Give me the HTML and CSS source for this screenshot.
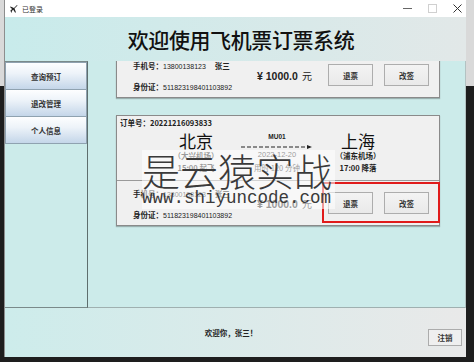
FILE: index.html
```html
<!DOCTYPE html>
<html>
<head>
    <title>已登录</title>
    <link rel="stylesheet" href="styles.css">
</head>
<body>
    <div class="window">
        <div class="titlebar">
            <svg class="app-icon" width="8" height="8" viewBox="0 0 16 16">
                <path d="M15 1 L9 7 L12 15 L10 15 L6.5 9.5 L3.5 12 L4 15 L2.5 15 L1.5 12.5 L-1 11.5 L1 11.5 L4 8 L0 4 L1 3 L8 6 L14 0 Z" fill="#222"/>
            </svg>
            <span class="title-text">已登录</span>
            <div class="win-controls">
                <span class="ctl ctl-min"></span>
                <span class="ctl ctl-max"></span>
                <span class="ctl ctl-close">
                    <svg width="9" height="9" viewBox="0 0 9 9"><path d="M0.5 0.5 L8.5 8.5 M8.5 0.5 L0.5 8.5" stroke="#333" stroke-width="1"/></svg>
                </span>
            </div>
        </div>

        <div class="header">
            <h1>欢迎使用飞机票订票系统</h1>
        </div>

        <div class="middle">
            <div class="sidebar">
                <button class="nav-button">查询预订</button>
                <button class="nav-button">退改管理</button>
                <button class="nav-button">个人信息</button>
            </div>

            <div class="main">
                <div class="ticket-list">
                    <!-- first ticket, scrolled partly out of view -->
                    <div class="ticket">
                        <div class="ticket-top">
                            <div class="order-no">订单号：20221216081520</div>
                            <div class="route">
                                <div class="stop">
                                    <div class="city">北京</div>
                                    <div class="airport">（大兴机场）</div>
                                    <div class="time">08:00 起飞</div>
                                </div>
                                <div class="flight">
                                    <div class="flight-no">MU01</div>
                                    <svg class="arrow" width="72" height="8" viewBox="0 0 72 8">
                                        <path d="M0 5 H69" stroke="#222" stroke-width="1" stroke-dasharray="4 2"/>
                                        <path d="M66 3 L71 5 L66 7 Z" fill="#222"/>
                                    </svg>
                                    <div class="date">2022-12-18</div>
                                    <div class="duration">用时 135 分钟</div>
                                </div>
                                <div class="stop">
                                    <div class="city">上海</div>
                                    <div class="airport">（浦东机场）</div>
                                    <div class="time">10:15 降落</div>
                                </div>
                            </div>
                        </div>
                        <div class="ticket-bottom">
                            <div class="passenger">
                                <div class="row"><span class="label">手机号：</span><span class="num">13800138123</span><span class="pname">张三</span></div>
                                <div class="row"><span class="label">身份证：</span><span class="num">511823198401103892</span></div>
                            </div>
                            <div class="price">¥ 1000.0<span class="yuan">元</span></div>
                            <div class="actions">
                                <button class="action-button">退票</button>
                                <button class="action-button">改签</button>
                            </div>
                        </div>
                    </div>

                    <div class="ticket">
                        <div class="ticket-top">
                            <div class="order-no">订单号：20221216093833</div>
                            <div class="route">
                                <div class="stop">
                                    <div class="city">北京</div>
                                    <div class="airport">（大兴机场）</div>
                                    <div class="time">15:00 起飞</div>
                                </div>
                                <div class="flight">
                                    <div class="flight-no">MU01</div>
                                    <svg class="arrow" width="72" height="8" viewBox="0 0 72 8">
                                        <path d="M0 5 H69" stroke="#222" stroke-width="1" stroke-dasharray="4 2"/>
                                        <path d="M66 3 L71 5 L66 7 Z" fill="#222"/>
                                    </svg>
                                    <div class="date">2022-12-20</div>
                                    <div class="duration">用时 120 分钟</div>
                                </div>
                                <div class="stop">
                                    <div class="city">上海</div>
                                    <div class="airport">（浦东机场）</div>
                                    <div class="time">17:00 降落</div>
                                </div>
                            </div>
                        </div>
                        <div class="ticket-bottom">
                            <div class="passenger">
                                <div class="row"><span class="label">手机号：</span><span class="num">13800138123</span><span class="pname">张三</span></div>
                                <div class="row"><span class="label">身份证：</span><span class="num">511823198401103892</span></div>
                            </div>
                            <div class="price">¥ 1000.0<span class="yuan">元</span></div>
                            <div class="actions">
                                <button class="action-button">退票</button>
                                <button class="action-button">改签</button>
                            </div>
                            <div class="highlight"></div>
                        </div>
                    </div>
                </div>

                <div class="watermark">
                    <div class="wm-big">是云猿实战</div>
                    <div class="wm-url">www.shiyuncode.com</div>
                </div>
            </div>
        </div>

        <div class="footer">
            <span class="welcome">欢迎你，张三！</span>
            <button class="logout">注销</button>
        </div>
    </div>
</body>
</html>
```

FILE: styles.css
```css
/* General Styles */
body {
    margin: 0;
    padding: 0;
    width: 474px;
    height: 362px;
    overflow: hidden;
    font-family: "Noto Sans CJK SC", "Liberation Sans", sans-serif;
    background: linear-gradient(to bottom, #d9d9d9 0, #d9d9d9 86px, #1e1e1e 86px);
}

.window {
    margin-left: 4px;
    width: 462px;
    height: 357px;
    border-left: 1px solid #8d8d8d;
    box-sizing: border-box;
    display: flex;
    flex-direction: column;
    background-color: #ccebea;
}

button {
    font-family: "Noto Sans CJK SC", "Liberation Sans", sans-serif;
    padding: 0;
    cursor: pointer;
    outline: none;
}

/* Title Bar */
.titlebar {
    height: 17px;
    background-color: #fff;
    display: flex;
    align-items: center;
    padding-left: 5px;
}

.titlebar .app-icon {
    margin-right: 4px;
}

.titlebar .title-text {
    font-size: 7px;
    color: #333;
    line-height: 10px;
}

.win-controls {
    margin-left: auto;
    display: flex;
    align-items: center;
    gap: 11px;
    padding-right: 2px;
}

.win-controls .ctl {
    width: 14px;
    height: 14px;
    display: flex;
    align-items: center;
    justify-content: center;
}

.ctl-min::before {
    content: "";
    width: 9px;
    height: 1px;
    background-color: #666;
}

.ctl-max::before {
    content: "";
    width: 7px;
    height: 7px;
    border: 1px solid #d0d0d0;
}

/* Header */
.header {
    height: 44px;
    background: linear-gradient(to right, #c8ebeb, #e2e8e8);
}

.header h1 {
    margin: 0;
    padding-left: 11px;
    font-size: 21px;
    font-weight: 500;
    letter-spacing: -0.4px;
    line-height: 44px;
    text-align: center;
    color: #111;
}

/* Middle */
.middle {
    height: 247px;
    display: flex;
}

.sidebar {
    width: 83px;
    box-sizing: border-box;
    border-top: 1px solid #7a8a8a;
    border-right: 1px solid #5e6e6e;
    border-bottom: 1px solid #7a8a8a;
    background-color: #ccebea;
}

.nav-button {
    display: block;
    width: 100%;
    height: 28px;
    border: 1px solid #8fa2b0;
    background: linear-gradient(to bottom, #fdfeff 0%, #edf3f9 40%, #c4d6e9 100%);
    font-size: 7.5px;
    font-weight: bold;
    color: #333;
}

.nav-button + .nav-button {
    margin-top: -1px;
}

.main {
    flex: 1;
    position: relative;
    overflow: hidden;
    border-right: 1px solid #b3c2c2;
    border-bottom: 1px solid #9fb0b0;
    background-color: #ccebea;
}

.ticket-list {
    margin-top: -74px;
    padding-left: 28px;
}

/* Ticket */
.ticket {
    width: 324px;
    box-sizing: border-box;
    border: 1px solid #8a8a8a;
    background-color: #f0f0f0;
    margin-bottom: 17px;
    box-shadow: 0 1px 1px rgba(0, 0, 0, 0.25);
}

.ticket-top {
    height: 65px;
    box-sizing: border-box;
    border-bottom: 1px solid #9a9a9a;
    padding: 2px 0 0 3px;
    color: #222;
}

.order-no {
    font-size: 7.5px;
    font-weight: bold;
    line-height: 10px;
}

.route {
    display: flex;
    margin-left: 46px;
    margin-top: 3px;
}

.stop {
    width: 60px;
    text-align: center;
}

.stop .city {
    font-size: 17px;
    line-height: 19px;
    color: #111;
}

.stop .airport,
.stop .time {
    font-size: 7.5px;
    font-weight: bold;
    line-height: 12px;
}

.flight {
    width: 102px;
    display: flex;
    flex-direction: column;
    align-items: center;
}

.flight .flight-no {
    font-family: "Liberation Sans", sans-serif;
    font-size: 6.5px;
    font-weight: bold;
    line-height: 10px;
    margin-top: 1px;
}

.flight .arrow {
    display: block;
}

.flight .date {
    font-family: "Liberation Sans", sans-serif;
    font-size: 7.5px;
    line-height: 10px;
}

.flight .duration {
    font-size: 7.5px;
    line-height: 10px;
    margin-top: 3px;
}

.ticket-bottom {
    height: 44px;
    position: relative;
    display: flex;
    align-items: center;
    padding-left: 16px;
    color: #222;
}

.passenger {
    width: 124px;
    display: flex;
    flex-direction: column;
    gap: 4px;
}

.passenger .row {
    line-height: 13px;
    white-space: nowrap;
}

.passenger .label {
    font-size: 7.5px;
    font-weight: bold;
}

.passenger .num {
    font-family: "Liberation Sans", sans-serif;
    font-size: 7px;
}

.passenger .pname {
    font-size: 7.5px;
    font-weight: bold;
    margin-left: 9px;
}

.price {
    font-family: "Liberation Sans", sans-serif;
    font-size: 10.5px;
    font-weight: bold;
    color: #222;
}

.price .yuan {
    font-family: "Noto Sans CJK SC", serif;
    font-weight: normal;
    font-size: 10px;
    margin-left: 4px;
}

.actions {
    margin-left: auto;
    display: flex;
    gap: 11px;
    padding-right: 10px;
}

.action-button {
    width: 45px;
    height: 22px;
    border: 1px solid #adadad;
    background: linear-gradient(to bottom, #f3f3f3, #e9e9e9);
    font-size: 7.5px;
    font-weight: bold;
    color: #333;
}

.highlight {
    position: absolute;
    left: 205px;
    right: -1px;
    top: 1px;
    bottom: 2px;
    border: 2px solid #e01b1b;
    pointer-events: none;
}

/* Watermark */
.watermark {
    position: absolute;
    left: 54px;
    top: 89px;
    width: 193px;
    height: 59px;
    background-color: rgba(255, 255, 255, 0.55);
    color: #3a3a3a;
    pointer-events: none;
}

.wm-big {
    font-size: 38px;
    font-weight: 200;
    line-height: 40px;
    letter-spacing: 0;
    white-space: nowrap;
}

.wm-url {
    font-family: "Liberation Mono", monospace;
    font-size: 17.5px;
    line-height: 16px;
    white-space: nowrap;
}

/* Footer */
.footer {
    height: 49px;
    display: flex;
    align-items: center;
    background: linear-gradient(to right, #cdeceb, #e9e9e9);
}

.footer .welcome {
    flex: 1;
    padding-left: 29px;
    text-align: center;
    font-size: 7.5px;
    font-weight: bold;
    color: #222;
}

.footer .logout {
    align-self: flex-end;
    margin: 0 4px 11px 0;
    width: 34px;
    height: 17px;
    border: 1px solid #acacac;
    background-color: #efefef;
    font-size: 7.5px;
    font-weight: bold;
    color: #333;
}
```
